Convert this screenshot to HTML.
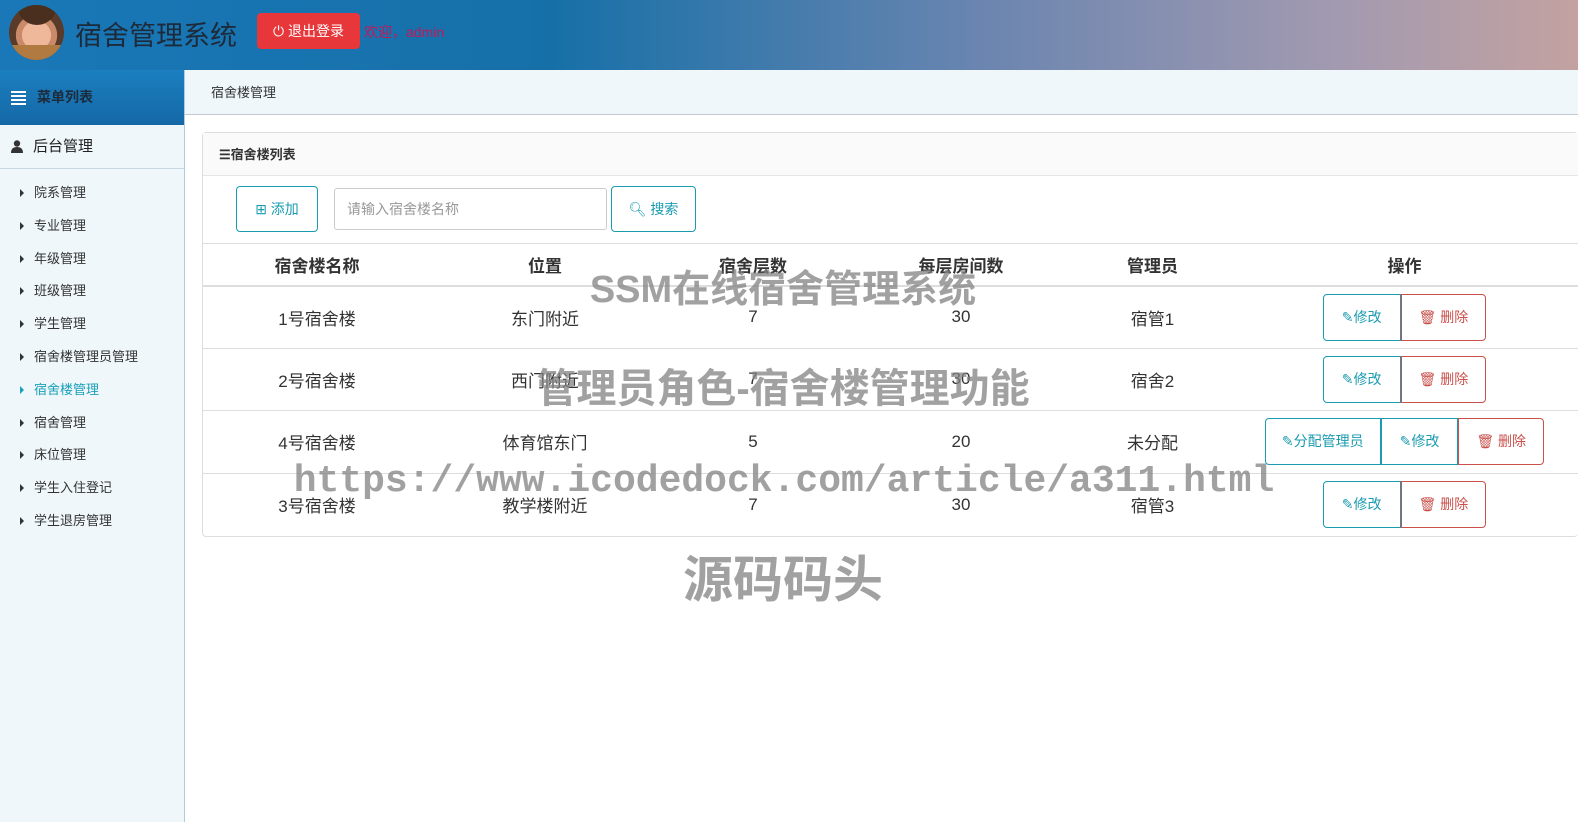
<!DOCTYPE html>
<html><head><meta charset="utf-8">
<style>
*{margin:0;padding:0;box-sizing:border-box}
body{width:1578px;height:822px;overflow:hidden;background:#fff;font-family:"Liberation Sans","Noto Sans CJK SC",sans-serif;color:#333;position:relative}
.hdr{position:absolute;left:0;top:0;width:1578px;height:70px;background:linear-gradient(90deg,#1a78b8 0%,#1670a8 35%,#6a85b0 62%,#a39ab0 85%,#c3a2a0 100%)}
.avatar{position:absolute;left:9px;top:5px;width:55px;height:55px;border-radius:50%;overflow:hidden;background:radial-gradient(circle at 50% 55%,#f0b89a 0 35%,#c88a68 36% 50%,#5a3a28 51%)}
.title{position:absolute;left:75px;top:14px;font-size:27px;color:#1d2a3a}
.logout{position:absolute;left:257px;top:13px;width:103px;height:36px;background:#e8373a;border-radius:4px;color:#fff;font-size:14px;line-height:36px;text-align:center}
.welcome{position:absolute;left:364px;top:22px;font-size:14px;color:#c2185b}
.side{position:absolute;left:0;top:70px;width:185px;height:752px;background:#eff7fb;border-right:1px solid #aacde0}
.mh{height:55px;background:linear-gradient(180deg,#1b7fc0,#1568a5);color:#1d2a3a;font-weight:bold;font-size:14px;line-height:55px;padding-left:37px;position:relative}
.mh i{position:absolute;left:11px;top:21px;width:15px;height:2px;background:#fff;box-shadow:0 4px #fff,0 8px #fff,0 12px #fff}
.bg{height:44px;line-height:44px;font-size:15px;padding-left:33px;border-bottom:1px solid #c8d8e2;position:relative;color:#222}
.side ul{list-style:none;padding-top:8px}
.side li{height:32.8px;line-height:32.8px;font-size:13px;padding-left:34px;position:relative;color:#333}
.side li:before{content:"";position:absolute;left:20px;top:12px;border-left:4px solid #333;border-top:4px solid transparent;border-bottom:4px solid transparent}
.side li.act{color:#1aa0b8}.side li.act:before{border-left-color:#1aa0b8}
.bc{position:absolute;left:185px;top:70px;width:1393px;height:45px;background:#eff7fb;border-bottom:1px solid #c0cad0;font-size:13px;line-height:45px;padding-left:26px}
.panel{position:absolute;left:202px;top:132px;width:1376px;height:405px;border:1px solid #ddd;border-radius:4px;border-right:none}
.ph{height:43px;background:#fafafa;border-bottom:1px solid #e5e5e5;font-size:13px;font-weight:bold;line-height:43px;padding-left:16px}
.btn{position:absolute;border:1px solid #1a9bb0;border-radius:4px;color:#1a9bb0;font-size:14px;text-align:center}
.inp{position:absolute;left:131px;top:55px;width:273px;height:42px;border:1px solid #ccc;border-radius:3px;font-size:14px;color:#999;line-height:40px;padding-left:12px}
table{position:absolute;left:0;top:110px;width:1376px;border-collapse:collapse;border-top:1px solid #ddd}
th{height:42px;font-size:17px;font-weight:bold;border-bottom:2px solid #ddd;text-align:center}
td{height:62.5px;font-size:17px;text-align:center;border-bottom:1px solid #ddd;color:#333}
tr:last-child td{border-bottom:none}
.ops{display:inline-flex}
.ops span{display:inline-block;height:47px;line-height:45px;font-size:14px;padding:0 16px;border:1px solid #1a9bb0;color:#1a9bb0}
.ops span:first-child{border-radius:4px 0 0 4px}
.ops span.ed{padding:0 18px}
.ops span.del{border-color:#c9504b;color:#c9504b;border-radius:0 4px 4px 0;padding:0 17px}
.wm{position:absolute;left:0;width:1578px;text-align:center;color:rgba(130,130,130,.75);font-weight:bold;font-family:"Liberation Sans","Noto Sans CJK SC",sans-serif}
</style></head><body>
<div class="hdr">
<div class="avatar"><div style="position:absolute;left:8px;top:0;width:40px;height:20px;background:#4a2e1e;border-radius:0 0 20px 20px"></div><div style="position:absolute;left:0;top:40px;width:55px;height:15px;background:#b07a40"></div></div>
<div class="title">宿舍管理系统</div>
<div class="logout">⏻ 退出登录</div>
<div class="welcome">欢迎，admin</div>
</div>
<div class="side">
<div class="mh"><i></i>菜单列表</div>
<div class="bg"><svg style="position:absolute;left:11px;top:15px" width="12" height="13" viewBox="0 0 12 13"><circle cx="6" cy="3.5" r="3.2" fill="#333"/><path d="M0 13 Q0 7 6 7 Q12 7 12 13Z" fill="#333"/></svg>后台管理</div>
<ul>
<li>院系管理</li><li>专业管理</li><li>年级管理</li><li>班级管理</li><li>学生管理</li><li>宿舍楼管理员管理</li><li class="act">宿舍楼管理</li><li>宿舍管理</li><li>床位管理</li><li>学生入住登记</li><li>学生退房管理</li>
</ul>
</div>
<div class="bc">宿舍楼管理</div>
<div class="panel">
<div class="ph">☰宿舍楼列表</div>
<div class="btn" style="left:33px;top:53px;width:82px;height:46px;line-height:44px">⊞ 添加</div>
<div class="inp">请输入宿舍楼名称</div>
<div class="btn" style="left:408px;top:53px;width:85px;height:46px;line-height:44px">🔍︎ 搜索</div>
<table>
<colgroup><col style="width:228px"><col style="width:228px"><col style="width:188px"><col style="width:228px"><col style="width:155px"><col></colgroup>
<tr><th>宿舍楼名称</th><th>位置</th><th>宿舍层数</th><th>每层房间数</th><th>管理员</th><th>操作</th></tr>
<tr><td>1号宿舍楼</td><td>东门附近</td><td>7</td><td>30</td><td>宿管1</td><td><div class="ops"><span class="ed">✎修改</span><span class="del">🗑︎ 删除</span></div></td></tr>
<tr><td>2号宿舍楼</td><td>西门附近</td><td>7</td><td>30</td><td>宿舍2</td><td><div class="ops"><span class="ed">✎修改</span><span class="del">🗑︎ 删除</span></div></td></tr>
<tr><td>4号宿舍楼</td><td>体育馆东门</td><td>5</td><td>20</td><td>未分配</td><td><div class="ops"><span>✎分配管理员</span><span class="ed" style="border-radius:0">✎修改</span><span class="del">🗑︎ 删除</span></div></td></tr>
<tr><td>3号宿舍楼</td><td>教学楼附近</td><td>7</td><td>30</td><td>宿管3</td><td><div class="ops"><span class="ed">✎修改</span><span class="del">🗑︎ 删除</span></div></td></tr>
</table>
</div>
<div class="wm" style="top:258px;font-size:38px;left:-6px">SSM在线宿舍管理系统</div>
<div class="wm" style="top:356px;font-size:40px;left:-6px">管理员角色-宿舍楼管理功能</div>
<div class="wm" style="top:460px;font-size:38px;font-family:'Liberation Mono',monospace;left:-5px">https://www.icodedock.com/article/a311.html</div>
<div class="wm" style="top:540px;font-size:50px;left:-6px">源码码头</div>
</body></html>
